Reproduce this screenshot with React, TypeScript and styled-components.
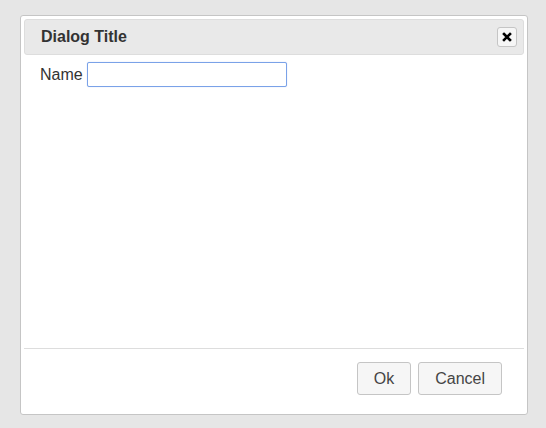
import styled, { createGlobalStyle } from "styled-components";

const GlobalStyle = createGlobalStyle`
  html, body {
    margin: 0;
    padding: 0;
    background-color: #e6e6e6;
    font-family: Arial, "Liberation Sans", Helvetica, sans-serif;
    font-size: 16px;
  }
`;

export default function App() {
  return (
    <>
      <GlobalStyle />
      <Page>
        <Dialog>
          <TitleBar>
            <Title>Dialog Title</Title>
            <CloseButton aria-label="Close">
              <svg width="12" height="12" viewBox="0 0 12 12">
                <path
                  d="M3 3 L9 9 M9 3 L3 9"
                  stroke="#000"
                  strokeWidth="2.6"
                  strokeLinecap="square"
                />
              </svg>
            </CloseButton>
          </TitleBar>
          <Content>
            <Field>
              <Label htmlFor="name">Name</Label>
              <Input id="name" type="text" />
            </Field>
          </Content>
          <ButtonPane>
            <Button>Ok</Button>
            <Button>Cancel</Button>
          </ButtonPane>
        </Dialog>
      </Page>
    </>
  );
}

const Page = styled.div`
  padding: 15px 0 0 20px;
`;

const Dialog = styled.div`
  width: 500px;
  height: 392px;
  padding: 3px;
  border: 1px solid #c5c5c5;
  border-radius: 3px;
  background-color: #ffffff;
  display: flex;
  flex-direction: column;
`;

const TitleBar = styled.div`
  height: 34px;
  padding: 0 6px 0 16px;
  border: 1px solid #dddddd;
  border-radius: 3px;
  background-color: #e9e9e9;
  display: flex;
  align-items: center;
  justify-content: space-between;
`;

const Title = styled.span`
  font-size: 16px;
  font-weight: 700;
  color: #333333;
`;

const CloseButton = styled.button`
  width: 20px;
  height: 20px;
  padding: 0;
  border: 1px solid #c5c5c5;
  border-radius: 3px;
  background-color: #f6f6f6;
  display: flex;
  align-items: center;
  justify-content: center;
  cursor: pointer;
`;

const Content = styled.div`
  flex: 1;
  padding: 7px 16px;
`;

const Field = styled.div`
  display: flex;
  align-items: center;
  gap: 4px;
`;

const Label = styled.label`
  font-size: 16px;
  color: #333333;
`;

const Input = styled.input`
  width: 196px;
  height: 23px;
  padding: 0 1px;
  border: 1px solid #7aa2e8;
  border-radius: 2px;
  box-shadow: 0 0 1px #a9c3f0;
  outline: none;
  font-family: inherit;
  font-size: 16px;
`;

const ButtonPane = styled.div`
  padding: 5px 22px 8px 6px;
  border-top: 1px solid #dddddd;
  display: flex;
  justify-content: flex-end;
  gap: 7px;
`;

const Button = styled.button`
  height: 33px;
  margin: 8px 0;
  padding: 0 16px;
  border: 1px solid #c5c5c5;
  border-radius: 3px;
  background-color: #f6f6f6;
  color: #454545;
  font-family: inherit;
  font-size: 16px;
  cursor: pointer;
`;
